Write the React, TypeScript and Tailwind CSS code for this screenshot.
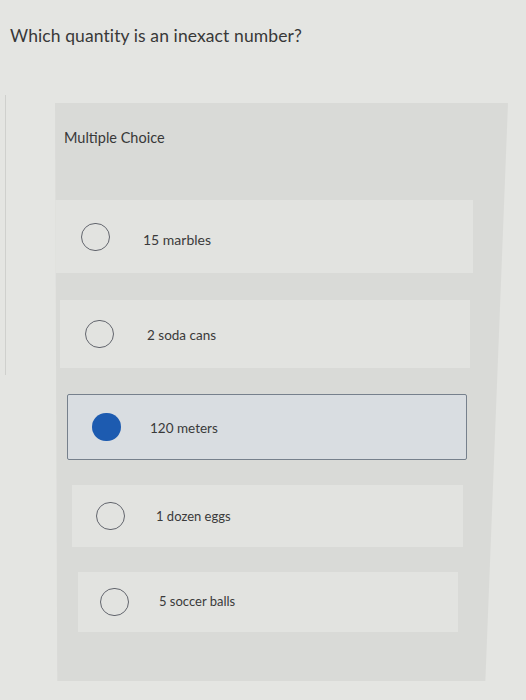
import React from "react";

type Choice = {
  label: string;
  selected?: boolean;
  box: string; // row placement and size
  radio: string; // radio column
  text: string;
};

const choices: Choice[] = [
  { label: "15 marbles", box: "mt-[53px] ml-[-2px] w-[420px] h-[73px]", radio: "ml-[28px]", text: "ml-[33px] text-[14px] pt-[6px]" },
  { label: "2 soda cans", box: "mt-[27px] ml-[5px] w-[410px] h-[68px]", radio: "ml-[25px]", text: "ml-[33px] text-[13.5px] pt-[2px]" },
  { label: "120 meters", selected: true, box: "mt-[26px] ml-[12px] w-[400px] h-[66px]", radio: "ml-[24px]", text: "ml-[29px] text-[13.5px] pt-[2px]" },
  { label: "1 dozen eggs", box: "mt-[25px] ml-[17px] w-[391px] h-[62px]", radio: "ml-[24px]", text: "ml-[31px] text-[13px] pt-[2px]" },
  { label: "5 soccer balls", box: "mt-[25px] ml-[23px] w-[380px] h-[60px]", radio: "ml-[22px]", text: "ml-[30px] text-[13px]" },
];

function Radio({ selected }: { selected?: boolean }) {
  if (selected) {
    return <div className="w-[29px] h-[28px] rounded-full bg-[#1d5bb0] shrink-0" />;
  }
  return <div className="w-[29px] h-[28px] rounded-full border-[1.5px] border-[#62656d] shrink-0" />;
}

export default function App() {
  return (
    <div
      className="w-[526px] h-[700px] overflow-hidden bg-[#e4e5e2] text-[#383838] relative"
      style={{ fontFamily: "Lato, 'Open Sans', sans-serif" }}
    >
      <div className="absolute left-[5px] top-[95px] h-[280px] w-px bg-[#cfd0cd]" />
      <h1 className="pt-[25px] pl-[10px] text-[17.5px] leading-[22px] font-normal tracking-[0.1px]">
        Which quantity is an inexact number?
      </h1>

      <div className="mt-[56px] ml-[55px] w-[453px] h-[578px] bg-[#d9dad7] [clip-path:polygon(0_0,100%_0,95%_100%,0.5%_100%)] pt-[26px]">
        <div className="ml-[9px] text-[14.5px] leading-[18px]">Multiple Choice</div>

        {choices.map((c) => (
          <div
            key={c.label}
            className={`${c.box} flex items-center ${
              c.selected
                ? "bg-[#d9dde1] border border-[#76808c] rounded-[2px]"
                : "bg-[#e2e3e0]"
            }`}
          >
            <div className={c.radio}>
              <Radio selected={c.selected} />
            </div>
            <span className={`${c.text} text-[#3a3a3a]`}>{c.label}</span>
          </div>
        ))}
      </div>
    </div>
  );
}
